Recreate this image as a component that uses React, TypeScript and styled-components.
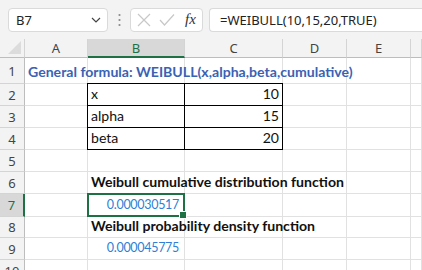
import React from 'react';
import styled, { createGlobalStyle } from 'styled-components';

const GlobalStyle = createGlobalStyle`
  body {
    margin: 0;
    background: #ffffff;
    overflow: hidden;
  }
`;

const Sheet = styled.div`
  width: 422px;
  height: 270px;
  overflow: hidden;
  background: #ffffff;
  font-family: Lato, 'Liberation Sans', sans-serif;
`;

const Toolbar = styled.div`
  height: 39px;
  background: #f3f3f3;
  display: flex;
  align-items: center;
  padding-left: 8px;
  box-sizing: border-box;
  font-family: 'Noto Sans', 'Open Sans', sans-serif;
`;

const NameBox = styled.div`
  width: 100px;
  height: 24px;
  box-sizing: border-box;
  background: #fff;
  border: 1px solid #dadada;
  border-radius: 4px;
  display: flex;
  align-items: center;
  justify-content: space-between;
  padding: 0 6px 0 7px;
  font-size: 13px;
  color: #222;
`;

const Dots = styled.div`
  width: 22px;
  display: flex;
  justify-content: center;
`;

const FxBox = styled.div`
  width: 73px;
  height: 24px;
  box-sizing: border-box;
  background: #fff;
  border: 1px solid #dadada;
  border-radius: 4px;
  display: flex;
  align-items: center;
  padding: 0 6px 0 6px;
  gap: 8px;
`;

const Fx = styled.span`
  font-family: 'Liberation Serif', serif;
  font-style: italic;
  font-size: 15px;
  color: #333;
  margin-left: 2px;
`;

const FormulaBar = styled.div`
  flex: 1;
  height: 24px;
  margin-left: 6px;
  box-sizing: border-box;
  background: #fff;
  border: 1px solid #dadada;
  border-right: none;
  border-radius: 4px 0 0 4px;
  display: flex;
  align-items: center;
  padding-left: 10px;
  font-size: 13px;
  color: #222;
`;

const Grid = styled.div`
  display: grid;
  grid-template-columns: 25px 63px 97px 98px 64px 64px 11px;
  grid-template-rows: 19px 26px 22px 22px 22px 22px 22px 23px 21px 22px 22px;
`;

const Corner = styled.div`
  background: #f3f3f3;
  border-right: 1px solid #d4d4d4;
  border-bottom: 1px solid #bdbdbd;
  box-sizing: border-box;
  position: relative;
  &::after {
    content: '';
    position: absolute;
    right: 3px;
    bottom: 3px;
    border-left: 13px solid transparent;
    border-bottom: 13px solid #dcdcdc;
  }
`;

const ColHead = styled.div<{ $sel?: boolean }>`
  background: ${p => (p.$sel ? '#d8d8d8' : '#f3f3f3')};
  border-right: 1px solid #d4d4d4;
  border-bottom: ${p => (p.$sel ? '2px solid #1e7145' : '1px solid #bdbdbd')};
  box-sizing: border-box;
  display: flex;
  align-items: center;
  justify-content: center;
  font-family: 'Noto Sans', 'Open Sans', sans-serif;
  font-size: 13px;
  color: ${p => (p.$sel ? '#1e7145' : '#444')};
  padding-top: ${p => (p.$sel ? '1px' : '0')};
`;

const RowHead = styled.div<{ $sel?: boolean }>`
  background: ${p => (p.$sel ? '#d8d8d8' : '#f3f3f3')};
  border-right: ${p => (p.$sel ? '2px solid #1e7145' : '1px solid #bdbdbd')};
  border-bottom: 1px solid #d4d4d4;
  box-sizing: border-box;
  display: flex;
  align-items: center;
  justify-content: center;
  font-family: 'Noto Sans', 'Open Sans', sans-serif;
  font-size: 13px;
  color: ${p => (p.$sel ? '#1e7145' : '#444')};
`;

const Cell = styled.div<{
  $right?: boolean;
  $bold?: boolean;
  $blue?: boolean;
  $title?: boolean;
  $box?: boolean;
  $boxTop?: boolean;
  $boxLeft?: boolean;
}>`
  position: relative;
  box-sizing: border-box;
  border-right: 1px solid #e1e1e1;
  border-bottom: 1px solid #e1e1e1;
  display: flex;
  align-items: flex-end;
  justify-content: ${p => (p.$right ? 'flex-end' : 'flex-start')};
  padding: 0 ${p => (p.$blue ? '5px' : '3px')} 2px 3px;
  font-size: ${p => (p.$blue ? '12.5px' : '14.1px')};
  letter-spacing: ${p => (p.$blue ? '-0.3px' : '0')};
  line-height: 18px;
  white-space: nowrap;
  overflow: visible;
  font-weight: ${p => (p.$bold || p.$title ? 700 : 400)};
  color: ${p => (p.$title ? '#3a62b4' : p.$blue ? '#2f7fd6' : '#111')};
  ${p =>
    p.$box &&
    `
    border-right: 1px solid #000;
    border-bottom: 1px solid #000;
  `}
  ${p => p.$boxTop && 'border-top: 1px solid #000; margin-top: -1px;'}
  ${p => p.$boxLeft && 'border-left: 1px solid #000; margin-left: -1px;'}
  & > span {
    position: relative;
    z-index: 1;
  }
`;

const Selection = styled.div`
  position: absolute;
  left: -1px;
  top: -1px;
  right: -1px;
  bottom: -1px;
  border: 2px solid #1e7145;
  pointer-events: none;
  &::after {
    content: '';
    position: absolute;
    right: -4px;
    bottom: -4px;
    width: 6px;
    height: 6px;
    background: #1e7145;
    border: 1px solid #fff;
  }
`;

const cols = ['A', 'B', 'C', 'D', 'E'];

type CellDef = {
  text?: string;
  right?: boolean;
  bold?: boolean;
  blue?: boolean;
  title?: boolean;
  box?: boolean;
  boxTop?: boolean;
  boxLeft?: boolean;
  selected?: boolean;
};

const rows: Record<number, Record<string, CellDef>> = {
  1: { A: { text: 'General formula: WEIBULL(x,alpha,beta,cumulative)', title: true } },
  2: {
    B: { text: 'x', box: true, boxTop: true, boxLeft: true },
    C: { text: '10', right: true, box: true, boxTop: true },
  },
  3: {
    B: { text: 'alpha', box: true, boxLeft: true },
    C: { text: '15', right: true, box: true },
  },
  4: {
    B: { text: 'beta', box: true, boxLeft: true },
    C: { text: '20', right: true, box: true },
  },
  6: { B: { text: 'Weibull cumulative distribution function', bold: true } },
  7: { B: { text: '0.000030517', right: true, blue: true, selected: true } },
  8: { B: { text: 'Weibull probability density function', bold: true } },
  9: { B: { text: '0.000045775', right: true, blue: true } },
};

const XIcon = () => (
  <svg width="14" height="14" viewBox="0 0 14 14">
    <path d="M1 1 L13 13 M13 1 L1 13" stroke="#c8c8c8" strokeWidth="1.2" fill="none" />
  </svg>
);

const CheckIcon = () => (
  <svg width="16" height="14" viewBox="0 0 16 14">
    <path d="M1 7 L5.5 12 L15 1.5" stroke="#c8c8c8" strokeWidth="1.2" fill="none" />
  </svg>
);

const Chevron = () => (
  <svg width="10" height="6" viewBox="0 0 10 6">
    <path d="M1 1 L5 5 L9 1" stroke="#444" strokeWidth="1.2" fill="none" />
  </svg>
);

const DotsIcon = () => (
  <svg width="3" height="14" viewBox="0 0 3 14">
    <circle cx="1.5" cy="2" r="1.1" fill="#8a8a8a" />
    <circle cx="1.5" cy="7" r="1.1" fill="#8a8a8a" />
    <circle cx="1.5" cy="12" r="1.1" fill="#8a8a8a" />
  </svg>
);

export default function App() {
  const rowNums = [1, 2, 3, 4, 5, 6, 7, 8, 9, 10];

  return (
    <>
      <GlobalStyle />
      <Sheet>
        <Toolbar>
          <NameBox>
            <span>B7</span>
            <Chevron />
          </NameBox>
          <Dots>
            <DotsIcon />
          </Dots>
          <FxBox>
            <XIcon />
            <CheckIcon />
            <Fx>fx</Fx>
          </FxBox>
          <FormulaBar>=WEIBULL(10,15,20,TRUE)</FormulaBar>
        </Toolbar>
        <Grid>
          <Corner />
          {cols.map(c => (
            <ColHead key={c} $sel={c === 'B'}>
              {c}
            </ColHead>
          ))}
          <ColHead />
          {rowNums.map(r => (
            <React.Fragment key={r}>
              <RowHead $sel={r === 7}>{r}</RowHead>
              {cols.map(c => {
                const d = rows[r]?.[c] ?? {};
                return (
                  <Cell
                    key={c}
                    $right={d.right}
                    $bold={d.bold}
                    $blue={d.blue}
                    $title={d.title}
                    $box={d.box}
                    $boxTop={d.boxTop}
                    $boxLeft={d.boxLeft}
                    style={d.selected ? { zIndex: 2 } : undefined}
                  >
                    {d.text && <span>{d.text}</span>}
                    {d.selected && <Selection />}
                  </Cell>
                );
              })}
              <Cell />
            </React.Fragment>
          ))}
        </Grid>
      </Sheet>
    </>
  );
}
